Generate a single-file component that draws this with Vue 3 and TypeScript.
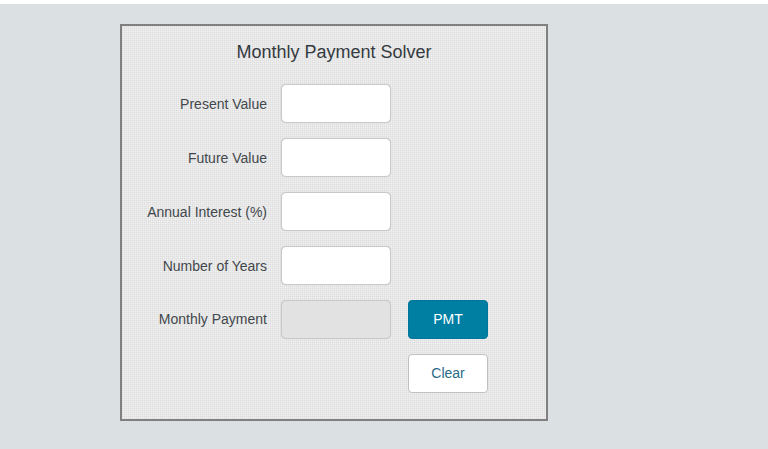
<script setup lang="ts">
const fields: string[] = ['Present Value', 'Future Value', 'Annual Interest (%)', 'Number of Years']
</script>

<template>
  <main class="page">
    <section class="panel">
      <h1 class="title">Monthly Payment Solver</h1>
      <div class="form">
        <template v-for="f in fields" :key="f">
          <label class="label">{{ f }}</label>
          <input class="field" type="text" />
          <span></span>
        </template>
        <label class="label raised">Monthly Payment</label>
        <input class="field result" type="text" disabled />
        <button class="btn primary" type="button">PMT</button>
        <span></span>
        <span></span>
        <button class="btn secondary" type="button">Clear</button>
      </div>
    </section>
  </main>
</template>

<style scoped>
.page {
  box-sizing: border-box;
  height: 445px;
  margin-top: 4px;
  padding: 20px 0 0 120px;
  background: #dbe0e2;
  font-family: "Liberation Sans", Arial, sans-serif;
  overflow: hidden;
}
.panel {
  box-sizing: border-box;
  width: 428px;
  height: 397px;
  border: 2px solid #808080;
  background-color: #f1f1f1;
  background-image:
    repeating-linear-gradient(0deg, rgba(190, 190, 190, 0.2) 0 1px, transparent 1px 2px),
    repeating-linear-gradient(90deg, rgba(190, 190, 190, 0.2) 0 1px, transparent 1px 2px);
  padding-top: 15px;
}
.title {
  margin: 0;
  font-size: 18px;
  font-weight: 400;
  line-height: 22px;
  text-align: center;
  color: #343a40;
}
.form {
  display: grid;
  grid-template-columns: 145px 110px 80px;
  column-gap: 14px;
  row-gap: 15px;
  grid-auto-rows: 39px;
  margin-top: 21px;
  align-items: center;
}
.form .btn {
  margin-left: 3px;
}
.label {
  font-size: 14px;
  text-align: right;
  color: #42474c;
}
.raised {
  padding-bottom: 2px;
}
.field {
  box-sizing: border-box;
  width: 110px;
  height: 39px;
  padding: 0 8px;
  border: 1px solid #c8c8c8;
  border-radius: 5px;
  background: #fff;
  box-shadow: 0 0 1px rgba(170, 170, 170, 0.6);
}
.result {
  background: #e2e2e2;
}
.btn {
  box-sizing: border-box;
  width: 80px;
  height: 39px;
  padding: 0 0 2px;
  border-radius: 4px;
  font-family: inherit;
  font-size: 14px;
}
.primary {
  border: 1px solid #00769a;
  background: #007fa3;
  color: #fff;
}
.secondary {
  border: 1px solid #c0c0c0;
  background: #fff;
  color: #2a6a85;
}
</style>

<style>
html, body { background: #fff; }
</style>
